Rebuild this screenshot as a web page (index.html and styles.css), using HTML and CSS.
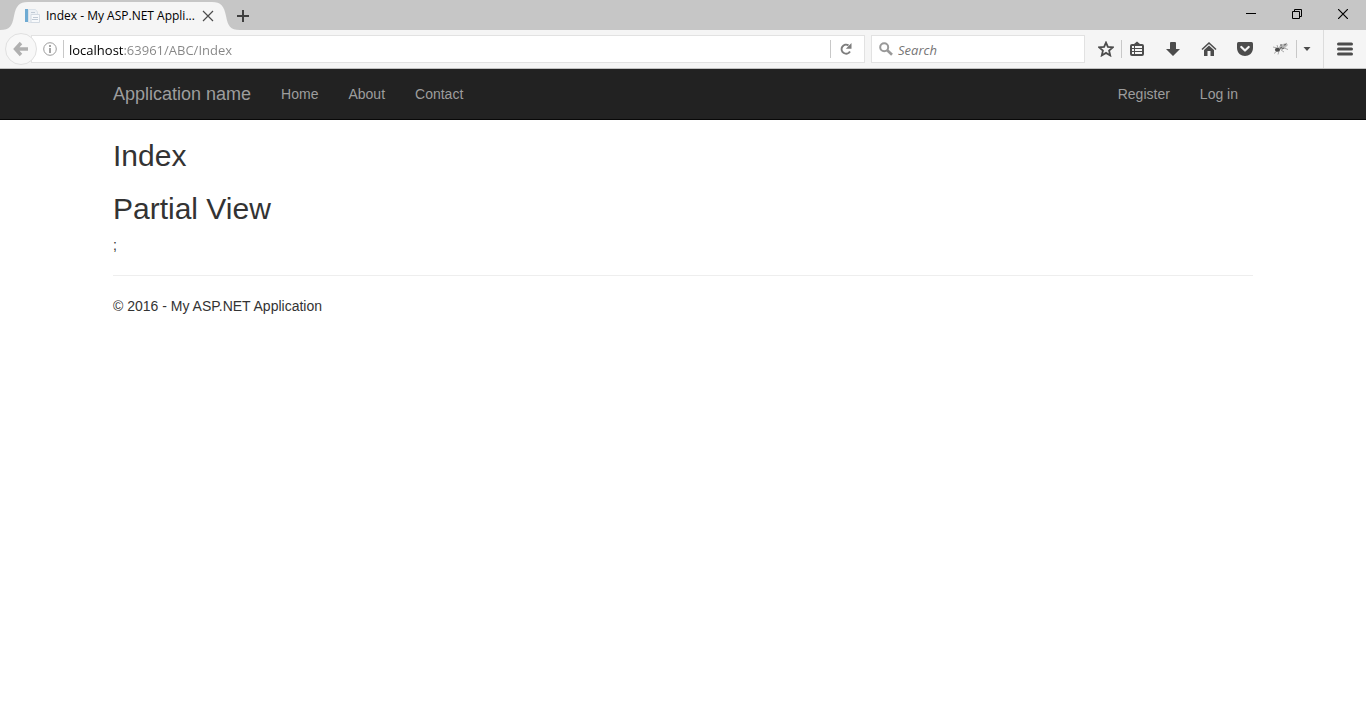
FILE: index.html
```html
<!DOCTYPE html>
<html lang="en">
<head>
    <meta charset="UTF-8">
    <meta name="viewport" content="width=device-width, initial-scale=1.0">
    <title>Index - My ASP.NET Application</title>
    <link rel="stylesheet" href="styles.css">
</head>
<body>
    <header class="browser">
        <div class="titlebar">
            <div class="tab">
                <svg class="tab-shape" width="240" height="28" viewBox="0 0 240 28">
                    <path d="M0 28C10 28 12 24 14 14C16 4 19 0 28 0H212C221 0 224 4 226 14C228 24 230 28 240 28Z" fill="#f5f5f5"/>
                </svg>
                <svg class="tab-icon" width="16" height="16" viewBox="0 0 16 16">
                    <rect x="1" y="1" width="3" height="13" fill="#6fabd3"/>
                    <path d="M4.500 1.500H11.500L13.500 4V14.500H4.500Z" fill="#edf1f5" stroke="#dbe2e9"/>
                    <path d="M7 6.500H15.500V14.500H7Z" fill="#f7f9fb" stroke="#d3dae2"/>
                    <path d="M7 4.500H11M9 9.500H14M8 11.500H14" stroke="#c0cad5"/>
                </svg>
                <span class="tab-title">Index - My ASP.NET Appli...</span>
                <button class="tab-close" aria-label="Close tab">
                    <svg width="12" height="12" viewBox="0 0 12 12"><path d="M1 1L11 11M11 1L1 11" stroke="#4c4c4c" stroke-width="1.200"/></svg>
                </button>
            </div>
            <button class="new-tab" aria-label="New tab">
                <svg width="14" height="14" viewBox="0 0 14 14"><path d="M7 1V13M1 7H13" stroke="#3f3f3f" stroke-width="2"/></svg>
            </button>
            <div class="window-buttons">
                <button aria-label="Minimize">
                    <svg width="10" height="10" viewBox="0 0 10 10"><path d="M0 4.500H10" stroke="#000"/></svg>
                </button>
                <button aria-label="Restore">
                    <svg width="10" height="10" viewBox="0 0 10 10"><path d="M.5 2.500H7.500V9.500H.5ZM2.500 2.500V.5H9.500V7.500H7.500" fill="none" stroke="#000"/></svg>
                </button>
                <button aria-label="Close">
                    <svg width="10" height="10" viewBox="0 0 10 10"><path d="M0 0L10 10M10 0L0 10" stroke="#000" stroke-width="1.200"/></svg>
                </button>
            </div>
        </div>

        <div class="toolbar">
            <button class="back" aria-label="Back">
                <svg width="16" height="16" viewBox="0 0 16 16"><path d="M8 2L2.500 8L8 14M3 8H15" fill="none" stroke="#b0b0b0" stroke-width="3.400"/></svg>
            </button>
            <div class="url-bar">
                <button class="info" aria-label="Site information">
                    <svg width="14" height="14" viewBox="0 0 14 14">
                        <circle cx="7" cy="7" r="6.300" fill="none" stroke="#9c9c9c"/>
                        <path d="M7 3V5M7 6V11" stroke="#9c9c9c" stroke-width="1.800"/>
                    </svg>
                </button>
                <span class="separator"></span>
                <input type="text" class="url" aria-label="Address" value="localhost:63961/ABC/Index">
                <span class="separator"></span>
                <button class="reload" aria-label="Reload">
                    <svg width="12" height="12" viewBox="0 0 12 12">
                        <path d="M8.500 2.300A4.500 4.500 0 1 0 10 8.500" fill="none" stroke="#7d7d7d" stroke-width="2"/>
                        <path d="M11.500 0V5.700H5.800Z" fill="#7d7d7d"/>
                    </svg>
                </button>
            </div>
            <label class="search-bar">
                <svg width="14" height="14" viewBox="0 0 14 14">
                    <circle cx="5.200" cy="5.200" r="4" fill="none" stroke="#999" stroke-width="2"/>
                    <path d="M8 8L13 12.800" stroke="#999" stroke-width="2.600"/>
                </svg>
                <input type="text" class="search" aria-label="Search" placeholder="Search">
            </label>
            <div class="tools">
                <div class="tool-pair">
                    <button aria-label="Bookmark this page">
                        <svg width="16" height="16" viewBox="0 0 16 16"><path d="M8 1.600L9.900 5.900L14.800 6.300L11.100 9.600L12.200 14.400L8 11.900L3.800 14.400L4.900 9.600L1.200 6.300L6.100 5.900Z" fill="none" stroke="#4c4c4c" stroke-width="1.800"/></svg>
                    </button>
                    <span class="separator"></span>
                    <button aria-label="Bookmarks">
                        <svg width="16" height="16" viewBox="0 0 16 16">
                            <path d="M3 3H5L8 0.500L11 3H13Q15 3 15 5V13Q15 15 13 15H3Q1 15 1 13V5Q1 3 3 3Z" fill="#4c4c4c"/>
                            <path d="M3 6H5M6 6H13M3 9H5M6 9H13M3 12H5M6 12H13" stroke="#f5f5f5" stroke-width="1.800"/>
                        </svg>
                    </button>
                </div>
                <button aria-label="Downloads">
                    <svg width="16" height="16" viewBox="0 0 16 16"><path d="M5 2Q5 1 6 1H10Q11 1 11 2V8H15L8 15L1 8H5Z" fill="#4c4c4c"/></svg>
                </button>
                <button aria-label="Home">
                    <svg width="16" height="16" viewBox="0 0 16 16">
                        <path d="M1 8.500L8 2L15 8.500" fill="none" stroke="#4c4c4c" stroke-width="1.600"/>
                        <path d="M3 9L8 4.500L13 9V15H9.500V10H6.500V15H3Z" fill="#4c4c4c"/>
                    </svg>
                </button>
                <button aria-label="Pocket">
                    <svg width="16" height="16" viewBox="0 0 16 16">
                        <path d="M1.500 1H14.500Q16 1 16 2.500V7C16 12 12 15 8 15S0 12 0 7V2.500Q0 1 1.500 1Z" fill="#4c4c4c"/>
                        <path d="M4.300 6L8 9.500L11.700 6" fill="none" stroke="#f5f5f5" stroke-width="2.200" stroke-linecap="round" stroke-linejoin="round"/>
                    </svg>
                </button>
                <div class="tool-pair">
                    <button aria-label="Firebug">
                        <svg width="16" height="16" viewBox="0 0 16 16">
                            <path d="M5 7L8 3.500L13.500 2L15 4L12 7L8 9Z" fill="#bdbdbd"/>
                            <path d="M0 6L4 7M1 12.500L4 10M5 13.500L6 10M8 9L11 11M11 7L15 8.500M4 4L5 7M14 2L8 7" stroke="#aaa" fill="none"/>
                            <ellipse cx="4.500" cy="8.800" rx="2.600" ry="2" fill="#4a4a4a"/>
                            <path d="M7 7.500L9 6M9 8L11 7M11 4L13 3.500M7 4L9 4" stroke="#666" stroke-width="1.200"/>
                        </svg>
                    </button>
                    <span class="separator"></span>
                    <button class="caret" aria-label="Firebug options">
                        <svg width="8" height="4" viewBox="0 0 8 4"><path d="M.5 0H7.500L4 4Z" fill="#4c4c4c"/></svg>
                    </button>
                </div>
                <button class="menu" aria-label="Open menu">
                    <svg width="16" height="14" viewBox="0 0 16 14"><path d="M1.500 2H14.500M1.500 7H14.500M1.500 12H14.500" stroke="#4c4c4c" stroke-width="3" stroke-linecap="round"/></svg>
                </button>
            </div>
        </div>
    </header>

    <nav class="navbar">
        <div class="container navbar-inner">
            <a class="navbar-brand" href="#">Application name</a>
            <ul class="nav">
                <li><a href="#">Home</a></li>
                <li><a href="#">About</a></li>
                <li><a href="#">Contact</a></li>
            </ul>
            <ul class="nav navbar-right">
                <li><a href="#">Register</a></li>
                <li><a href="#">Log in</a></li>
            </ul>
        </div>
    </nav>

    <div class="container">
        <main>
            <h2>Index</h2>
            <h2>Partial View</h2>
            ;
        </main>
        <hr>
        <footer>
            <p>&copy; 2016 - My ASP.NET Application</p>
        </footer>
    </div>
</body>
</html>
```
FILE: styles.css
```css
* {
    box-sizing: border-box;
}

body {
    margin: 0;
    font-family: "Liberation Sans", Arial, sans-serif;
    font-size: 14px;
    line-height: 20px;
    color: #333;
    background-color: #fff;
}

/* Browser window */
.browser {
    font-family: "Open Sans", "Noto Sans", sans-serif;
    background-color: #f5f5f5;
}

.browser button {
    display: flex;
    align-items: center;
    justify-content: center;
    flex-shrink: 0;
    padding: 0;
    border: none;
    background: none;
}

.browser input {
    min-width: 0;
    flex: 1;
    padding: 1px 0 0;
    border: none;
    outline: none;
    background: none;
    font-family: inherit;
    font-size: 13px;
}

.titlebar {
    display: flex;
    align-items: flex-end;
    height: 30px;
    background-color: #c6c6c6;
}

.tab {
    position: relative;
    display: flex;
    align-items: center;
    width: 230px;
    height: 28px;
    padding: 0 16px 0 24px;
    font-size: 12px;
    color: #000;
}

.tab-shape {
    position: absolute;
    top: 0;
    left: 0;
}

.tab-icon,
.tab-title,
.tab-close {
    position: relative;
}

.tab-icon {
    flex-shrink: 0;
}

.tab-title {
    flex: 1;
    margin-left: 6px;
    white-space: nowrap;
}

.new-tab {
    width: 26px;
    height: 28px;
}

.window-buttons {
    display: flex;
    margin-left: auto;
}

.window-buttons button {
    width: 46px;
    height: 30px;
    padding-bottom: 2px;
}

.toolbar {
    display: flex;
    align-items: center;
    height: 39px;
    padding-left: 5px;
    border-bottom: 1px solid #c0c0c0;
}

.browser .back {
    z-index: 1;
    width: 32px;
    height: 32px;
    margin-right: -6px;
    border: 1px solid #e0e0e0;
    border-radius: 50%;
    background-color: #f8f8f8;
}

.url-bar,
.search-bar {
    display: flex;
    align-items: center;
    height: 28px;
    border: 1px solid #e2e2e2;
    background-color: #fff;
}

.url-bar {
    flex: 1;
    padding-left: 11px;
}

.info {
    width: 14px;
    height: 26px;
    margin-right: 6px;
}

.separator {
    width: 1px;
    height: 18px;
    flex-shrink: 0;
    background-color: #c8c8c8;
}

/* Host is black, the port and path are grey */
.browser .url {
    margin-left: 5px;
    color: transparent;
    background: linear-gradient(to right, #000 55px, #858585 55px);
    -webkit-background-clip: text;
    background-clip: text;
}

.browser .reload {
    width: 33px;
    height: 26px;
    padding-right: 3px;
}

.search-bar {
    width: 214px;
    margin-left: 6px;
    padding-left: 7px;
    gap: 5px;
}

.search::placeholder {
    color: #757575;
    font-style: italic;
    opacity: 1;
}

.tools {
    display: flex;
    gap: 6px;
    margin-left: 6px;
}

.tool-pair {
    display: flex;
    align-items: center;
}

.tools button {
    width: 30px;
    height: 38px;
}

.tools .caret {
    width: 20px;
}

.tools .menu {
    width: 43px;
    border-left: 1px solid #dcdcdc;
}

/* Page */
.container {
    max-width: 1170px;
    margin: 0 auto;
    padding: 0 15px;
}

.navbar {
    margin-bottom: -1px;
    background-color: #222;
    border-bottom: 1px solid #080808;
}

.navbar-inner {
    display: flex;
}

.navbar a {
    display: block;
    padding: 15px;
    color: #9d9d9d;
    text-decoration: none;
}

.navbar .navbar-brand {
    padding-left: 0;
    font-size: 18px;
}

.nav {
    display: flex;
    margin: 0;
    padding: 0;
    list-style: none;
}

.navbar-right {
    margin-left: auto;
}

h2 {
    margin: 20px 0 10px;
    font-size: 30px;
    font-weight: 500;
    line-height: 33px;
}

hr {
    margin: 20px 0;
    border: 0;
    border-top: 1px solid #eee;
}

footer p {
    margin: 0 0 10px;
}
```
